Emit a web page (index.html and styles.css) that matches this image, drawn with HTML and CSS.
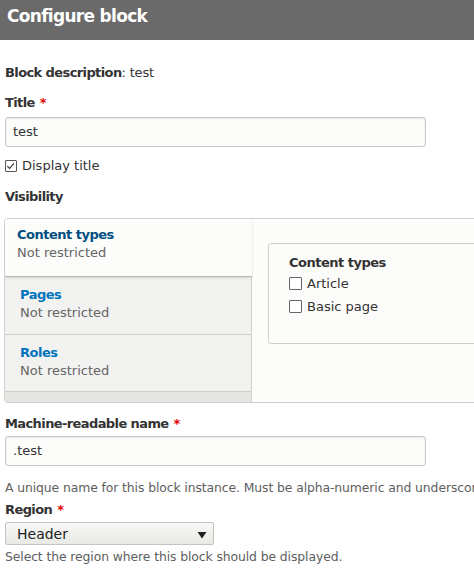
FILE: index.html
```html
<!DOCTYPE html>
<html>
<head>
<meta charset="utf-8">
<link rel="stylesheet" href="styles.css">
</head>
<body>
<div class="header"><h1 class="header-title">Configure block</h1></div>
<div class="page">
  <div class="desc-line"><strong class="strong">Block description</strong>: test</div>

  <div class="field">
    <label class="label">Title<span class="req">*</span></label>
    <div class="input">test</div>
  </div>

  <div class="check-row">
    <span class="box"><svg width="12" height="12" viewBox="0 0 12 12"><path d="M2.5 6.2 L5 8.7 L9.8 3.2" fill="none" stroke="#333" stroke-width="1.2"/></svg></span>
    <span>Display title</span>
  </div>

  <div class="section-title">Visibility</div>

  <div class="vtabs">
    <ul class="vtabs-menu">
      <li class="vtab selected"><div class="vtab-title">Content types</div><div class="vtab-summary">Not restricted</div></li>
      <li class="vtab"><div class="vtab-title">Pages</div><div class="vtab-summary">Not restricted</div></li>
      <li class="vtab"><div class="vtab-title">Roles</div><div class="vtab-summary">Not restricted</div></li>
    </ul>
    <div class="vtabs-pane">
      <div class="fieldset">
        <div class="fieldset-title">Content types</div>
        <div class="option"><span class="box"></span><span>Article</span></div>
        <div class="option"><span class="box"></span><span>Basic page</span></div>
      </div>
    </div>
  </div>

  <div class="field field-machine">
    <label class="label">Machine-readable name<span class="req">*</span></label>
    <div class="input input-machine">.test</div>
    <div class="help help-machine">A unique name for this block instance. Must be alpha-numeric and underscore separated.</div>
  </div>

  <div class="field field-region">
    <label class="label">Region<span class="req">*</span></label>
    <div class="select"><span>Header</span><svg class="arrow" width="10" height="8" viewBox="0 0 10 8"><path d="M0.5 1 L9.5 1 L5 7.5 Z" fill="#222"/></svg></div>
    <div class="help help-region">Select the region where this block should be displayed.</div>
  </div>
</div>
</body>
</html>
```

FILE: styles.css
```css
html, body {
  margin: 0;
  padding: 0;
  overflow: hidden;
}
body {
  font-family: "DejaVu Sans", sans-serif;
  font-size: 13px;
  line-height: 18px;
  color: #333;
  background: #fff;
  width: 474px;
}
.header {
  height: 40px;
  background: #6a6a6a;
  display: flex;
  align-items: center;
  padding-left: 7px;
}
.header-title {
  margin: 0 0 8px 0;
  font-size: 17px;
  font-weight: bold;
  color: #fff;
  letter-spacing: -0.7px;
}
.page {
  padding-left: 5px;
}
.desc-line {
  margin-top: 24px;
  white-space: nowrap;
  letter-spacing: -0.2px;
}
.strong {
  letter-spacing: -0.6px;
}
.field {
  margin-top: 12px;
}
.label {
  display: block;
  font-weight: bold;
  white-space: nowrap;
  letter-spacing: -0.6px;
}
.req {
  color: #e20000;
  margin-left: 5px;
  font-weight: bold;
}
.input {
  margin-top: 5px;
  width: 412px;
  height: 28px;
  border: 1px solid #c8c8c5;
  border-radius: 3px;
  background: #fcfcfa;
  box-shadow: inset 0 1px 2px rgba(0,0,0,0.08);
  padding-left: 7px;
  display: flex;
  align-items: center;
  color: #333;
}
.check-row {
  margin-top: 10px;
  display: flex;
  align-items: center;
  gap: 5px;
}
.box {
  width: 12px;
  height: 12px;
  border: 1px solid #555;
  box-sizing: border-box;
  background: #fff;
  display: inline-flex;
  flex-shrink: 0;
  border-radius: 1px;
}
.box svg {
  margin: -1px 0 0 -1px;
}
.section-title {
  margin-top: 13px;
  font-weight: bold;
  letter-spacing: -0.6px;
}
.vtabs {
  margin-top: 12px;
  margin-left: -1px;
  width: 520px;
  height: 183px;
  border: 1px solid #cfcfcc;
  border-radius: 4px;
  display: flex;
  background: #f2f2f0;
  overflow: hidden;
}
.vtabs-menu {
  list-style: none;
  margin: 0;
  padding: 0;
  width: 246px;
  border-right: 1px solid #cfcfcc;
  background: #e6e6e3;
  display: flex;
  flex-direction: column;
}
.vtab {
  height: 57px;
  padding: 9px 0 0 15px;
  box-sizing: border-box;
  background: #f2f2f0;
  border-top: 1px solid #cfcfcc;
}
.vtab + .vtab {
  height: 58px;
}
.vtab:last-child {
  border-bottom: 1px solid #cfcfcc;
}
.vtab.selected {
  background: #fcfcfa;
  border-top: none;
  padding: 7px 0 0 12px;
  margin-right: -1px;
  position: relative;
  z-index: 1;
  box-shadow: 0 2px 2px rgba(0,0,0,0.12);
}
.vtab-title {
  font-weight: bold;
  color: #0074bd;
  letter-spacing: -0.5px;
}
.vtab.selected .vtab-title {
  color: #004f80;
}
.vtab-summary {
  color: #666;
}
.vtabs-pane {
  flex: 1;
  background: #fcfcfa;
  padding: 24px 0 0 16px;
}
.fieldset {
  height: 101px;
  border: 1px solid #cfcfcc;
  border-radius: 3px;
  background: #fcfcfa;
  padding: 10px 0 0 20px;
  box-sizing: border-box;
}
.fieldset-title {
  font-weight: bold;
  line-height: 18px;
  letter-spacing: -0.5px;
}
.option {
  display: flex;
  align-items: center;
  gap: 5px;
  height: 23px;
}
.option .box {
  width: 13px;
  height: 13px;
  border-color: #666;
}
.field-machine {
  margin-top: 12px;
}
.input-machine {
  margin-top: 3px;
}
.help {
  color: #5e5e5e;
  white-space: nowrap;
  font-size: 12.4px;
  letter-spacing: -0.1px;
}
.help-machine {
  margin-top: 13px;
}
.field-region {
  margin-top: 4px;
}
.select {
  margin-top: 3px;
  width: 209px;
  height: 23px;
  box-sizing: border-box;
  border: 1px solid #c3c3c0;
  border-radius: 2px;
  background: linear-gradient(#f8f8f6, #e8e8e5);
  display: flex;
  align-items: center;
  padding-left: 11px;
  font-size: 14px;
  color: #1e1e1e;
  position: relative;
}
.arrow {
  position: absolute;
  left: 191px;
  top: 8px;
}
.help-region {
  margin-top: 3px;
}
```
